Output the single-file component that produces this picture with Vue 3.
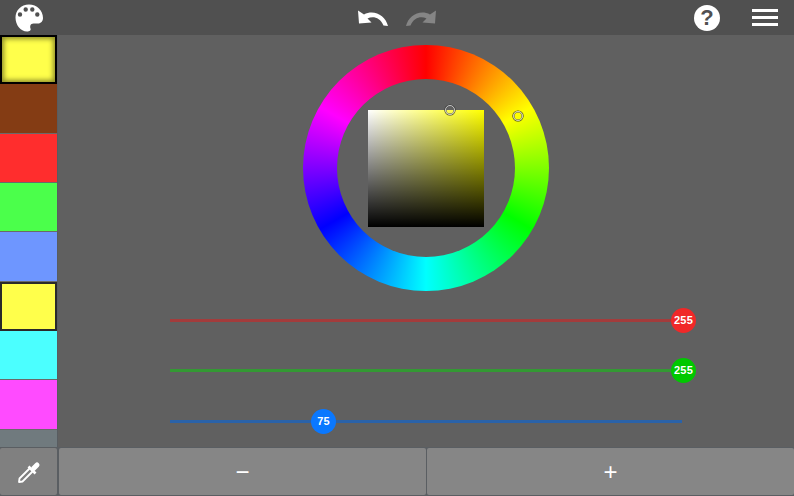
<template>
  <div class="app">
    <header class="topbar">
      <button class="icon-btn palette">
        <svg width="30" height="30" viewBox="0 0 30 30">
          <path fill="#fff" fill-rule="evenodd" d="M15 1.500C7 1.500 1.500 7.500 1.500 14.500 1.500 22 6.500 28.500 13 28.500c2.500 0 4.300-1 3.500-3-.7-2-.3-5 3-5H24c3 0 5-2.500 5-5.500C29 7.500 23 1.500 15 1.500ZM3.800 11.500a2.200 2.200 0 1 1 4.400 0 2.200 2.200 0 0 1-4.400 0Zm5.700-5a2.200 2.200 0 1 1 4.400 0 2.200 2.200 0 0 1-4.400 0Zm6.600 0a2.200 2.200 0 1 1 4.400 0 2.200 2.200 0 0 1-4.400 0Zm5 5a2.200 2.200 0 1 1 4.400 0 2.200 2.200 0 0 1-4.400 0Z" />
        </svg>
      </button>
      <div class="history">
        <svg width="32" height="20" viewBox="0 0 32 20">
          <path fill="#fff" d="M1 1.500 2 14.500 14.500 13.500 10.500 9.500C15.500 6.800 23 8 26.500 16.500L31 17C28.500 6.500 17 0 7 5.500Z" />
        </svg>
        <svg width="32" height="20" viewBox="0 0 32 20">
          <path fill="#858585" d="M31 1.500 30 14.500 17.500 13.500 21.500 9.500C16.500 6.800 9 8 5.500 16.500L1 17C3.500 6.500 15 0 25 5.500Z" />
        </svg>
      </div>
      <div class="top-right">
        <div class="help">?</div>
        <div class="burger"><span></span><span></span><span></span></div>
      </div>
    </header>

    <div class="body">
      <aside class="swatches">
        <div v-for="(s, i) in swatches" :key="i" class="swatch" :class="{ picked: i === 5, current: i === 0 }" :style="{ background: s }"></div>
        <div class="swatch-rest"></div>
      </aside>

      <main class="editor">
        <div class="wheel">
          <div class="sv">
            <span class="handle sv-handle"></span>
          </div>
          <span class="handle hue-handle"></span>
        </div>

        <div class="sliders">
          <div v-for="c in channels" :key="c.name" class="slider">
            <div class="track" :style="{ background: c.track }"></div>
            <div class="thumb" :style="{ background: c.color, left: thumbLeft(c.value) }">{{ c.value }}</div>
          </div>
        </div>
      </main>
    </div>

    <footer class="bottom">
      <button class="btn pick">
        <svg width="24" height="24" viewBox="0 0 24 24">
          <path fill="none" stroke="#fff" stroke-width="1.800" stroke-linejoin="round" d="M12.500 8.500 2.500 18.500 2 22 5.500 21.500 15.500 11.500" />
          <path fill="none" stroke="#fff" stroke-width="2.600" d="M11.500 6.500 18.500 13.500" />
          <path fill="none" stroke="#fff" stroke-width="5" stroke-linecap="round" d="M16.500 8.500 20 5" />
        </svg>
      </button>
      <button class="btn wide">−</button>
      <button class="btn wide">+</button>
    </footer>
  </div>
</template>

<script setup>
const swatches = ['#ffff4b', '#843c14', '#ff2d2d', '#4bff4b', '#6e96ff', '#ffff4b', '#4bffff', '#ff4bff']

const channels = [
  { name: 'r', value: 255, color: '#f02828', track: '#a33c3c' },
  { name: 'g', value: 255, color: '#00c800', track: '#339933' },
  { name: 'b', value: 75, color: '#0a78ff', track: '#2a62a8' }
]

// thumb centre moves 2px per channel step
const thumbLeft = (v) => `${3 + v * 2 - 11.5}px`
</script>

<style>
html, body {
  margin: 0;
  background: #606060;
}
</style>

<style scoped>
.app {
  width: 794px;
  height: 496px;
  display: flex;
  flex-direction: column;
  background: #606060;
  overflow: hidden;
  font-family: "Liberation Sans", Arial, sans-serif;
}
.topbar {
  height: 35px;
  flex: none;
  background: #505050;
  display: grid;
  grid-template-columns: 120px 1fr 120px;
  align-items: center;
}
.icon-btn {
  border: 0;
  background: none;
  padding: 0;
  width: 58px;
  display: flex;
  align-items: center;
  justify-content: center;
  height: 35px;
}
.history {
  display: flex;
  justify-content: center;
  gap: 16px;
  padding-top: 2px;
}
.top-right {
  display: flex;
  align-items: center;
  justify-content: flex-end;
  gap: 32px;
  padding-right: 16px;
}
.help {
  width: 26px;
  height: 26px;
  border-radius: 50%;
  background: #fff;
  color: #505050;
  font-size: 22px;
  font-weight: 700;
  line-height: 26px;
  text-align: center;
}
.burger {
  width: 26px;
  display: flex;
  flex-direction: column;
  gap: 4px;
}
.burger span {
  height: 3px;
  background: #fff;
}
.body {
  flex: 1;
  min-height: 0;
  display: flex;
}
.swatches {
  width: 58px;
  flex: none;
  display: flex;
  flex-direction: column;
  overflow: hidden;
  border-right: 1px solid #585c60;
  box-sizing: border-box;
}
.swatch {
  height: 49.350px;
  flex: none;
  box-sizing: border-box;
  border-bottom: 1px solid #6a6a6a;
}
.swatch.picked {
  border: 2px solid #2a2a2a;
}
.swatch.current {
  border: 2px solid #000;
  box-shadow: inset 0 0 5px 2px rgba(0, 0, 0, 0.45);
}
.swatch-rest {
  flex: 1;
  background: #707a7e;
}
.editor {
  flex: 1;
  display: flex;
  flex-direction: column;
  align-items: center;
  padding-top: 10px;
}
.wheel {
  width: 246px;
  height: 246px;
  flex: none;
  position: relative;
  border-radius: 50%;
  display: flex;
  align-items: center;
  justify-content: center;
  background: conic-gradient(#f00, #ff0, #0f0, #0ff, #00f, #f0f, #f00);
}
.wheel::before {
  content: "";
  position: absolute;
  inset: 34px;
  border-radius: 50%;
  background: #606060;
}
.sv {
  width: 116px;
  height: 117px;
  position: relative;
  background: linear-gradient(to top, #000, transparent), linear-gradient(to right, #fff, #ff0);
}
.handle {
  position: absolute;
  box-sizing: border-box;
  width: 10px;
  height: 10px;
  border: 1.500px solid #c4c4c4;
  border-radius: 50%;
  box-shadow: 0 0 0 0.600px #333, inset 0 0 0 0.500px #555;
}
.sv-handle {
  left: 77px;
  top: -5px;
}
.hue-handle {
  left: 210px;
  top: 66px;
}
.sliders {
  width: 512px;
  margin-top: 17px;
  margin-right: 1px;
  display: flex;
  flex-direction: column;
  gap: 25px;
}
.slider {
  height: 25px;
  position: relative;
  display: flex;
  align-items: center;
}
.slider:last-child {
  margin-top: 1px;
}
.track {
  width: 100%;
  height: 3px;
}
.thumb {
  position: absolute;
  top: 0;
  width: 25px;
  height: 25px;
  border-radius: 50%;
  color: #fff;
  font-size: 11px;
  font-weight: 700;
  letter-spacing: 0.200px;
  line-height: 25px;
  text-align: center;
}
.bottom {
  height: 49px;
  flex: none;
  display: flex;
  gap: 1px;
  background: #5a5e62;
  box-sizing: border-box;
  padding: 1px 0;
}
.btn {
  border: 0;
  padding: 0;
  background: #868686;
  border-radius: 2px;
  color: #fff;
  font-family: inherit;
  font-size: 24px;
  display: flex;
  align-items: center;
  justify-content: center;
}
.pick {
  width: 57px;
  flex: none;
  margin-right: 1px;
  background: #808080;
}
.wide {
  flex: 1;
}
</style>
